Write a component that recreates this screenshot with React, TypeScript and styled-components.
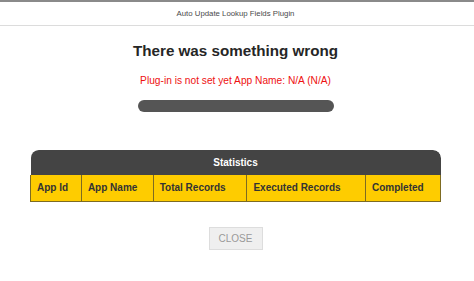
import { FunctionComponent } from "react";
import styled, { createGlobalStyle } from "styled-components";

const GlobalStyle = createGlobalStyle`
    html, body {
        margin: 0;
        padding: 0;
        background: #ffffff;
        font-family: "Liberation Sans", Arial, sans-serif;
    }
`;

const Page = styled.div`
    width: 474px;
    height: 281px;
    border-top: 2px solid #8a8a8a;
    box-sizing: border-box;
    overflow: hidden;
`;

const Header = styled.div`
    display: flex;
    align-items: center;
    justify-content: center;
    height: 23px;
    padding-right: 3px;
    border-bottom: 1px solid #dcdcdc;
    font-family: Arimo, "Liberation Sans", Arial, sans-serif;
    font-size: 7.8px;
    color: #4a4a4a;
`;

const Body = styled.div`
    display: flex;
    flex-direction: column;
    align-items: center;
    padding-right: 3px;
`;

const Title = styled.h1`
    margin: 16px 0 0;
    font-size: 15.2px;
    line-height: 18px;
    font-weight: 700;
    color: #262626;
`;

const ErrorText = styled.p`
    margin: 15px 0 0;
    font-size: 10.2px;
    line-height: 12px;
    color: #ee1111;
`;

const ProgressBar = styled.div`
    margin-top: 13px;
    width: 196px;
    height: 12px;
    border-radius: 6px;
    background: #555555;
`;

const Table = styled.table`
    margin-top: 38px;
    width: 411px;
    border-collapse: collapse;
    border-radius: 8px 8px 0 0;
    overflow: hidden;
`;

const Caption = styled.th`
    height: 25px;
    padding: 0;
    background: #444444;
    color: #ffffff;
    font-size: 10px;
    font-weight: 700;
    text-align: center;
    border-radius: 8px 8px 0 0;
`;

const HeadCell = styled.th<{ $width: number }>`
    width: ${p => p.$width}px;
    height: 26px;
    padding: 0 6px;
    box-sizing: border-box;
    background: #fecc00;
    color: #333333;
    font-size: 10px;
    font-weight: 700;
    text-align: left;
    border: 1px solid #7d6b22;
    border-top: none;
`;

const CloseButton = styled.button`
    margin-top: 25px;
    width: 54px;
    height: 23px;
    padding: 0;
    background: #efefef;
    border: 1px solid #dddddd;
    color: #9a9a9a;
    font-family: "Liberation Sans", Arial, sans-serif;
    font-size: 10px;
`;

const columns = [
    { label: "App Id", width: 51 },
    { label: "App Name", width: 72 },
    { label: "Total Records", width: 94 },
    { label: "Executed Records", width: 119 },
    { label: "Completed", width: 75 },
];

const App: FunctionComponent = () => {
    return (
        <>
            <GlobalStyle />
            <Page>
                <Header>Auto Update Lookup Fields Plugin</Header>
                <Body>
                    <Title>There was something wrong</Title>
                    <ErrorText>Plug-in is not set yet App Name: N/A (N/A)</ErrorText>
                    <ProgressBar />
                    <Table>
                        <thead>
                            <tr>
                                <Caption colSpan={columns.length}>Statistics</Caption>
                            </tr>
                            <tr>
                                {columns.map(col => (
                                    <HeadCell key={col.label} $width={col.width}>
                                        {col.label}
                                    </HeadCell>
                                ))}
                            </tr>
                        </thead>
                    </Table>
                    <CloseButton>CLOSE</CloseButton>
                </Body>
            </Page>
        </>
    );
};

export default App;
